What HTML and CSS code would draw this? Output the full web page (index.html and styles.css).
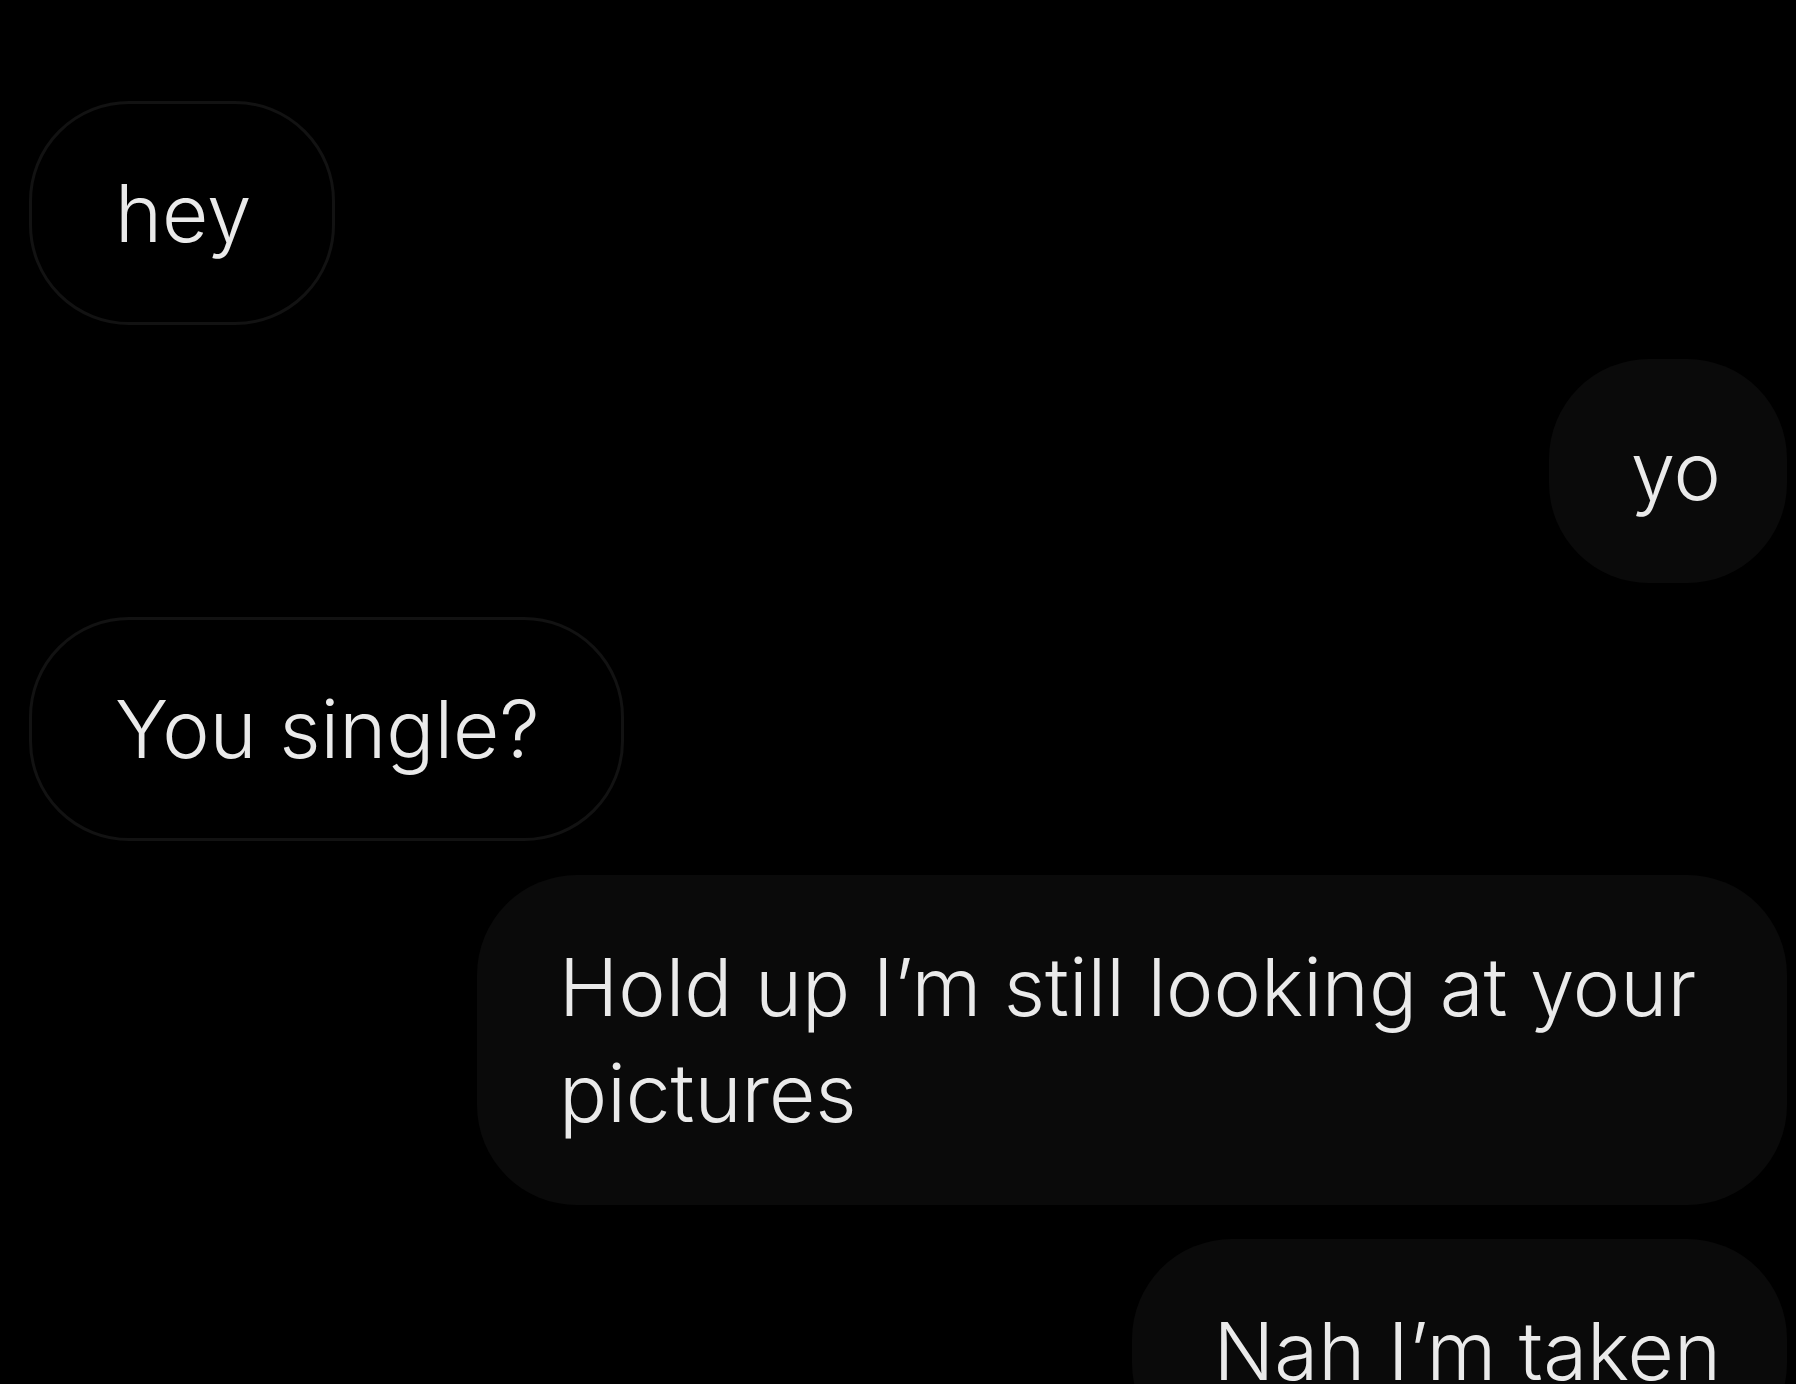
FILE: index.html
```html
<!DOCTYPE html>
<html lang="en">
<head>
<meta charset="utf-8">
<title>Chat</title>
<link rel="stylesheet" href="styles.css">
</head>
<body>
<main class="thread">
  <div class="bubble received">hey</div>
  <div class="bubble sent">yo</div>
  <div class="bubble received">You single?</div>
  <div class="bubble sent">Hold up I’m still looking at your pictures</div>
  <div class="bubble sent">Nah I’m taken</div>
</main>
</body>
</html>
```
FILE: styles.css
```css
html, body {
  margin: 0;
  padding: 0;
  background: #000;
  height: 100%;
  overflow: hidden;
}
.thread {
  display: flex;
  flex-direction: column;
  gap: 34px;
  padding: 101px 9px 0 29px;
  font-family: Inter, "Liberation Sans", sans-serif;
  font-weight: 300;
  font-size: 80px;
  line-height: 106px;
  color: #eaeaea;
}
.bubble {
  box-sizing: border-box;
  border-radius: 100px;
  width: fit-content;
  max-width: 1310px;
}
.received {
  align-self: flex-start;
  border: 3px solid #121212;
  padding: 56px 81px 56px 83px;
}
.sent {
  align-self: flex-end;
  background: #0a0a0a;
  padding: 59px 66px 59px 82px;
}
```
